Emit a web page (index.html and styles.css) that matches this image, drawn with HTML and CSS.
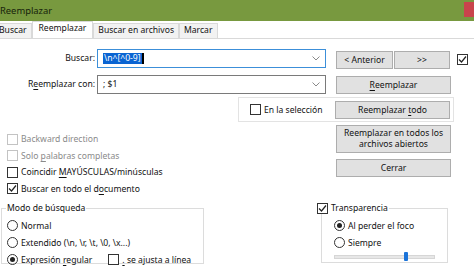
FILE: index.html
```html
<!DOCTYPE html>
<html lang="es">
  <head>
    <meta charset="UTF-8" />
    <title>Reemplazar</title>
    <link rel="stylesheet" href="styles.css">
  </head>
  <body>
    <div class="titlebar">
      <span class="title">Reemplazar</span>
      <span class="close"></span>
    </div>

    <div class="tabs">
      <span class="tab first">Buscar</span>
      <span class="tab active">Reemplazar</span>
      <span class="tab">Buscar en archivos</span>
      <span class="tab">Marcar</span>
    </div>

    <div class="panel">
      <div class="row row-find">
        <span class="field-label">Buscar:</span>
        <div class="combo focused">
          <span class="combo-text"><span class="sel">\n^[^0-9]</span><span class="caret"></span></span>
          <svg class="chev" width="8" height="5" viewBox="0 0 8 5"><path d="M0.5 0.5 L4 4 L7.5 0.5" fill="none" stroke="#8a8a8a" stroke-width="1"/></svg>
        </div>
        <button class="btn btn-prev">&lt; Anterior</button>
        <button class="btn btn-next">&gt;&gt;</button>
        <span class="box checked">
          <svg width="9" height="9" viewBox="0 0 9 9"><path d="M1 4.5 L3.5 7 L8 1.5" fill="none" stroke="#222" stroke-width="1.2"/></svg>
        </span>
      </div>

      <div class="row row-replace">
        <span class="field-label">R<u>e</u>emplazar con:</span>
        <div class="combo">
          <span class="combo-text">; $1</span>
          <svg class="chev" width="8" height="5" viewBox="0 0 8 5"><path d="M0.5 0.5 L4 4 L7.5 0.5" fill="none" stroke="#8a8a8a" stroke-width="1"/></svg>
        </div>
        <button class="btn btn-wide"><u>R</u>eemplazar</button>
      </div>

      <div class="selection-box">
        <label class="check"><span class="box"></span><span>En la selección</span></label>
        <button class="btn btn-wide btn-all">Reemplazar <u>t</u>odo</button>
      </div>

      <div class="options">
        <div class="check-list">
          <label class="check disabled"><span class="box"></span><span>Backward direction</span></label>
          <label class="check disabled"><span class="box"></span><span>Solo <u>p</u>alabras completas</span></label>
          <label class="check"><span class="box"></span><span>Coincidir <u>M</u>AYÚSCULAS/minúsculas</span></label>
          <label class="check"><span class="box checked"><svg width="9" height="9" viewBox="0 0 9 9"><path d="M1 4.5 L3.5 7 L8 1.5" fill="none" stroke="#222" stroke-width="1.2"/></svg></span><span>Buscar en todo el d<u>o</u>cumento</span></label>
        </div>
        <div class="side-buttons">
          <button class="btn btn-wide btn-tall">Reemplazar en todos los<br>archivos abiertos</button>
          <button class="btn btn-wide btn-close">Cerrar</button>
        </div>
      </div>

      <div class="groups">
        <fieldset class="group mode">
          <legend>Modo de búsqueda</legend>
          <label class="radio-row"><span class="radio"></span><span>Normal</span></label>
          <label class="radio-row"><span class="radio"></span><span>Extendido (\n, \r, \t, \0, \x...)</span></label>
          <div class="radio-line">
            <label class="radio-row"><span class="radio on"></span><span>Expresión <u>r</u>egular</span></label>
            <label class="check dot-line"><span class="box"></span><span><u>.</u> se ajusta a línea</span></label>
          </div>
        </fieldset>

        <fieldset class="group transp">
          <legend><span class="box checked"><svg width="9" height="9" viewBox="0 0 9 9"><path d="M1 4.5 L3.5 7 L8 1.5" fill="none" stroke="#222" stroke-width="1.2"/></svg></span><span>Transparencia</span></legend>
          <label class="radio-row"><span class="radio on"></span><span>Al perder el foco</span></label>
          <label class="radio-row"><span class="radio"></span><span>Siempre</span></label>
          <div class="slider"><span class="thumb"></span></div>
        </fieldset>
      </div>
    </div>
  </body>
</html>
```

FILE: styles.css
```css
* {
  box-sizing: border-box;
}
body {
  margin: 0;
  width: 474px;
  height: 279px;
  overflow: hidden;
  background-color: #fff;
  font-family: "Noto Sans", sans-serif;
  font-size: 8.6px;
  line-height: 12px;
  color: #111;
  white-space: nowrap;
}
u {
  text-decoration-thickness: 1px;
  text-underline-offset: 2px;
}
.titlebar {
  height: 21px;
  background-color: #78993f;
  display: flex;
  justify-content: space-between;
  align-items: flex-start;
}
.title {
  font-size: 9.4px;
  line-height: 21px;
  color: #16220b;
}
.close {
  width: 10px;
  height: 15px;
  margin-top: 2px;
  background-color: #c9444c;
}
.tabs {
  height: 18px;
  display: flex;
  align-items: flex-end;
  border-bottom: 1px solid #d9d9d9;
}
.tab {
  height: 15px;
  padding: 0 4px;
  line-height: 13px;
  background-color: #f2f2f2;
  border: 1px solid #d9d9d9;
  border-bottom: none;
}
.tab.first {
  margin-left: -6px;
}
.tab.active {
  height: 17px;
  background-color: #fff;
  padding: 0 6px;
  line-height: 12px;
}
.panel {
  padding-top: 9px;
}
.row {
  display: flex;
  align-items: center;
  height: 20px;
}
.row-find .btn {
  margin-top: 3px;
}
.row-replace {
  margin-top: 6px;
}
.field-label {
  width: 97px;
  text-align: right;
  padding-right: 2px;
}
.combo {
  width: 229px;
  height: 19px;
  border: 1px solid #7a7a7a;
  display: flex;
  align-items: center;
  justify-content: space-between;
  padding: 0 5px 0 5px;
}
.combo.focused {
  border-color: #3c8fd9;
}
.combo-text {
  display: flex;
  align-items: center;
}
.sel {
  background-color: #0a64d2;
  color: #fff;
  padding: 0 1px;
  line-height: 11px;
}
.caret {
  width: 2px;
  height: 11px;
  background-color: #000;
}
.btn {
  font-family: inherit;
  font-size: 8.6px;
  color: #111;
  background-color: #e1e1e1;
  border: 1px solid #adadad;
  height: 18px;
  padding: 0;
  line-height: 12px;
}
.btn-prev {
  width: 57px;
  margin-left: 10px;
}
.btn-next {
  width: 56px;
  margin-left: 1px;
}
.btn-wide {
  width: 115px;
}
.row-replace .btn-wide {
  margin-left: 10px;
  margin-top: 2px;
}
.box {
  width: 11px;
  height: 11px;
  border: 1px solid #333;
  background-color: #fff;
  display: inline-flex;
  align-items: center;
  justify-content: center;
  flex-shrink: 0;
}
.row-find .box {
  margin-left: 7px;
  margin-top: 3px;
}
.check {
  display: flex;
  align-items: center;
  gap: 3px;
}
.check.disabled {
  color: #8a8a8a;
}
.check.disabled .box {
  border-color: #c3c3c3;
}
.selection-box {
  margin: 3px 0 0 238px;
  width: 216px;
  height: 25px;
  border: 1px solid #e3e3e3;
  display: flex;
  align-items: center;
  padding-left: 11px;
}
.btn-all {
  margin-left: auto;
  margin-right: 3px;
}
.options {
  display: flex;
  justify-content: space-between;
  padding-left: 7px;
  margin-top: 3px;
}
.check-list {
  display: flex;
  flex-direction: column;
  padding-top: 6px;
}
.check-list .check {
  height: 16.5px;
}
.side-buttons {
  display: flex;
  flex-direction: column;
  gap: 6px;
  margin-right: 23px;
}
.btn-tall {
  height: 28px;
  line-height: 11px;
}
.groups {
  display: flex;
  margin-top: 5px;
}
.group {
  margin: 0;
  border: 1px solid #dcdcdc;
  padding: 3px 0 0 5px;
}
.group legend {
  padding: 0 1px;
  margin-left: -1px;
  display: flex;
  align-items: center;
  gap: 3px;
}
.mode {
  width: 203px;
  height: 62px;
  margin-left: 1px;
}
.transp {
  width: 127px;
  height: 61px;
  margin-left: 117px;
  padding-left: 12px;
}
.transp legend {
  margin-left: -18px;
}
.radio-row {
  display: flex;
  align-items: center;
  gap: 3px;
  height: 17px;
}
.radio {
  width: 11px;
  height: 11px;
  border: 1px solid #333;
  border-radius: 50%;
  display: inline-flex;
  align-items: center;
  justify-content: center;
  flex-shrink: 0;
}
.radio.on::after {
  content: "";
  width: 5px;
  height: 5px;
  border-radius: 50%;
  background-color: #222;
}
.radio-line {
  display: flex;
  align-items: center;
}
.dot-line {
  margin-left: 16px;
}
.slider {
  position: relative;
  width: 101px;
  height: 4px;
  margin-top: 4px;
  background-color: #e7e7e7;
  border: 1px solid #d6d6d6;
}
.thumb {
  position: absolute;
  left: 69px;
  top: -4px;
  width: 4px;
  height: 9px;
  background-color: #1a73d9;
  border-radius: 1px;
}
```
